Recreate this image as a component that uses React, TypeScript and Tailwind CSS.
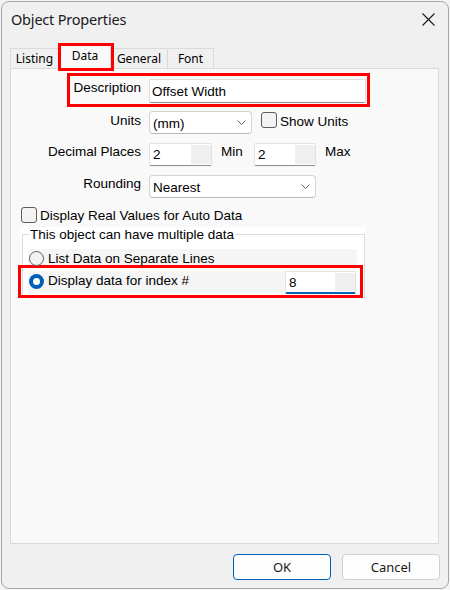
import React from "react";

const sans = "font-['Liberation_Sans','Arial',sans-serif]";
const ui = "font-['Noto_Sans','Open_Sans',sans-serif]";

function Chevron() {
  return (
    <svg width="9" height="5" viewBox="0 0 9 5" className="block">
      <path d="M0.5 0.5 L4.5 4.5 L8.5 0.5" fill="none" stroke="#5f5f5f" strokeWidth="1" />
    </svg>
  );
}

function Select({ text, w }: { text: string; w: string }) {
  return (
    <div
      className={`${w} h-[23px] flex items-center justify-between bg-white border border-[#d3d3d3] border-b-[#b8b8b8] rounded-[4px] pl-[3px] pr-[5px]`}
    >
      <span className="leading-[15px] pt-[2px]">{text}</span>
      <Chevron />
    </div>
  );
}

function SpinInput({ w, value, focused }: { w: string; value: string; focused?: boolean }) {
  return (
    <div
      className={`${w} h-[23px] flex items-stretch bg-white border border-[#e2e2e2] ${
        focused ? "border-b-[#005fb8] border-b-2" : "border-b-[#8a8a8a]"
      } rounded-[2px]`}
    >
      <span className="flex-1 leading-[15px] pl-[3px] pt-[3px]">{value}</span>
      <span className="w-[20px] bg-[#efefef] mt-[1px] mb-[1px] mr-[0px]" />
    </div>
  );
}

function Checkbox() {
  return <span className="block w-[16px] h-[16px] rounded-[3px] border border-[#5c5c5c] bg-[#f3f3f3]" />;
}

function Radio({ checked }: { checked?: boolean }) {
  if (checked) {
    return (
      <span className="flex w-[15px] h-[15px] rounded-full bg-[#005fb8] items-center justify-center">
        <span className="block w-[7px] h-[7px] rounded-full bg-white" />
      </span>
    );
  }
  return <span className="block w-[15px] h-[15px] rounded-full border border-[#5c5c5c] bg-[#f3f3f3]" />;
}

export default function App() {
  return (
    <div className={`w-[450px] h-[590px] bg-[#f3f3f3] pt-[1px] pl-[1px] overflow-hidden text-black`}>
      <div className="w-[448px] h-[588px] border border-[#a8a8a8] rounded-[8px] bg-[#f0f0f0] flex flex-col overflow-hidden">
        {/* title bar */}
        <div className="h-[34px] flex items-center justify-between pl-[9px] pr-[13px]">
          <span className={`${ui} text-[14.5px] tracking-[-0.2px] leading-[20px] text-[#1a1a1a]`}>Object Properties</span>
          <svg width="13" height="13" viewBox="0 0 13 13" className="block">
            <path d="M0.5 0.5 L12.5 12.5 M12.5 0.5 L0.5 12.5" fill="none" stroke="#1a1a1a" strokeWidth="1.1" />
          </svg>
        </div>

        {/* tabs */}
        <div className={`${ui} text-[12px] h-[32px] flex items-end pl-[8px] relative z-10`}>
          <div className="w-[49px] h-[20px] border border-b-0 border-[#dadada] bg-[#f0f0f0] flex items-center justify-center leading-[16px]">
            Listing
          </div>
          <div className="relative w-[52px] h-[24px] -mb-[1px] border border-b-0 border-[#dadada] bg-[#f9f9f9] flex items-start justify-center pt-[2px] leading-[16px]">
            Data
            <span className="absolute left-[-2px] right-[-4px] top-[-3px] bottom-[-2px] border-[3px] border-[#ff0000]" />
          </div>
          <div className="w-[57px] h-[20px] border border-b-0 border-l-0 border-[#dadada] bg-[#f0f0f0] flex items-center justify-center leading-[16px]">
            General
          </div>
          <div className="w-[46px] h-[20px] border border-b-0 border-l-0 border-[#dadada] bg-[#f0f0f0] flex items-center justify-center leading-[16px]">
            Font
          </div>
        </div>

        {/* panel */}
        <div className={`${sans} text-[13.5px] ml-[8px] w-[429px] h-[476px] border border-[#d9d9d9] bg-[#f9f9f9] flex flex-col`}>
          {/* Description */}
          <div className="mt-[4px] ml-[56px] w-[303px] h-[34px] border-[3px] border-[#ff0000] flex items-start pl-[0px] pt-[3px]">
            <span className="w-[71px] text-right leading-[15px] pt-[1px] whitespace-nowrap">Description</span>
            <div className="ml-[8px] w-[217px] h-[24px] bg-white border border-[#dcdcdc] border-b-[#8f8f8f] rounded-[2px] pl-[2px] pt-[4px] leading-[15px]">
              Offset Width
            </div>
          </div>

          {/* Units */}
          <div className="mt-[4px] flex items-start">
            <span className="w-[130px] text-right leading-[15px] pt-[2px]">Units</span>
            <div className="ml-[8px]">
              <Select text="(mm)" w="w-[103px]" />
            </div>
            <div className="ml-[9px] mt-[1px]">
              <Checkbox />
            </div>
            <span className="ml-[3px] leading-[15px] pt-[3px]">Show Units</span>
          </div>

          {/* Decimal Places */}
          <div className="mt-[9px] flex items-start">
            <span className="w-[130px] text-right leading-[15px] pt-[1px] whitespace-nowrap">Decimal Places</span>
            <div className="ml-[8px]">
              <SpinInput w="w-[63px]" value="2" />
            </div>
            <span className="ml-[9px] w-[33px] leading-[15px] pt-[1px]">Min</span>
            <SpinInput w="w-[62px]" value="2" />
            <span className="ml-[9px] leading-[15px] pt-[1px]">Max</span>
          </div>

          {/* Rounding */}
          <div className="mt-[9px] flex items-start">
            <span className="w-[130px] text-right leading-[15px] pt-[1px]">Rounding</span>
            <div className="ml-[8px]">
              <Select text="Nearest" w="w-[167px]" />
            </div>
          </div>

          {/* Display real values */}
          <div className="mt-[9px] ml-[10px] flex items-start">
            <Checkbox />
            <span className="ml-[3px] leading-[15px] pt-[1px]">Display Real Values for Auto Data</span>
          </div>

          {/* group */}
          <div className="mt-[4px] ml-[9px] w-[345px] h-[71px] bg-white">
            <fieldset className="ml-[2px] w-[343px] border border-b-0 border-[#dcdcdc] m-0 p-0 min-w-0">
              <legend className="ml-[6px] px-[1px] leading-[15px]">This object can have multiple data</legend>
              <div className="mt-[7px] ml-[5px] w-[329px] h-[16px] bg-[#f5f5f5] flex items-start pl-[1px]">
                <span className="mt-[2px]">
                  <Radio />
                </span>
                <span className="ml-[4px] leading-[15px] pt-[2px]">List Data on Separate Lines</span>
              </div>
              <div className="ml-[-5px] w-[345px] h-[33px] border-[3px] border-[#ff0000] pt-[3px]">
                <div className="ml-[7px] w-[328px] h-[23px] bg-[#f5f5f5] flex items-start pl-[1px]">
                  <span className="mt-[3px]">
                    <Radio checked />
                  </span>
                  <span className="ml-[4px] leading-[15px] pt-[2px] flex-1">Display data for index #</span>
                  <SpinInput w="w-[71px]" value="8" focused />
                </div>
              </div>
            </fieldset>
          </div>
        </div>

        {/* footer */}
        <div className={`${ui} text-[13px] flex justify-end gap-[11px] pr-[8px] mt-[10px]`}>
          <button className="w-[98px] h-[26px] rounded-[4px] border border-[#005fb8] bg-[#fdfdfd] leading-[16px] text-[#1a1a1a]">
            OK
          </button>
          <button className="w-[98px] h-[26px] rounded-[4px] border border-[#d0d0d0] bg-[#fdfdfd] leading-[16px] text-[#1a1a1a]">
            Cancel
          </button>
        </div>
      </div>
    </div>
  );
}
